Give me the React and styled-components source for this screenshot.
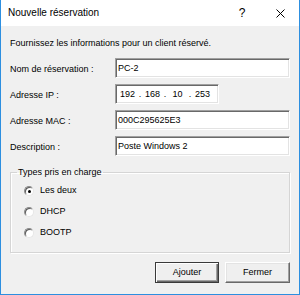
import React from 'react'
import styled, { createGlobalStyle } from 'styled-components'

const GlobalStyle = createGlobalStyle`
  html, body {
    margin: 0;
    padding: 0;
    background: #ffffff;
  }
  body {
    font-family: "Liberation Sans", Arial, sans-serif;
    font-size: 9px;
    color: #000;
  }
`

const Window = styled.div`
  width: 300px;
  height: 295px;
  box-sizing: border-box;
  display: flex;
  flex-direction: column;
  border: 1px solid #2d8fe0;
  border-top: none;
`

const TitleBar = styled.div`
  height: 26px;
  flex: none;
  display: flex;
  align-items: center;
  background: #ffffff;
`

const Title = styled.div`
  flex: 1;
  padding-left: 7px;
  font-size: 10px;
  line-height: 12px;
`

const TitleButton = styled.div`
  width: 38px;
  height: 26px;
  display: flex;
  align-items: center;
  justify-content: center;
  font-size: 12px;
`

const Body = styled.div`
  flex: 1;
  display: flex;
  flex-direction: column;
  background: #f0f0f0;
  padding: 12px 9px 10px 9px;
`

const Intro = styled.div`
  line-height: 11px;
  height: 11px;
`

const Form = styled.div`
  margin-top: 9px;
  display: flex;
  flex-direction: column;
  gap: 6px;
`

const Row = styled.div`
  display: flex;
  align-items: center;
  height: 20px;
`

const Label = styled.div`
  width: 105px;
  line-height: 11px;
  padding-top: 3px;
`

const Field = styled.div`
  box-sizing: border-box;
  width: ${(p) => p.$width}px;
  height: 20px;
  display: flex;
  align-items: center;
  padding-left: 2px;
  background: #ffffff;
  border: 1px solid;
  border-color: #a0a0a0 #ffffff #ffffff #a0a0a0;
  box-shadow: inset 1px 1px #696969, inset -1px -1px #e3e3e3;
  line-height: 11px;
`

const Segment = styled.span`
  width: 19px;
  text-align: center;
`

const Dot = styled.span`
  width: 6px;
  text-align: center;
`

const Group = styled.fieldset`
  margin: 11px 0 0;
  padding: 2px 0 9px;
  min-width: 0;
  border: 1px solid #d5d5d5;
  box-shadow: 1px 1px #ffffff, inset 1px 1px #ffffff;
`

const Legend = styled.legend`
  margin-left: 6px;
  padding: 0 1px;
  line-height: 11px;
`

const RadioRow = styled.label`
  display: flex;
  align-items: center;
  height: 21px;
  padding-left: 13px;
`

const RadioCircle = styled.span`
  box-sizing: border-box;
  width: 10px;
  height: 10px;
  border-radius: 50%;
  background: #ffffff;
  border: 1px solid;
  border-color: #8a8a8a #e6e6e6 #e6e6e6 #8a8a8a;
  box-shadow: inset 1px 1px #5a5a5a;
  display: flex;
  align-items: center;
  justify-content: center;

  &::after {
    content: '';
    width: 3px;
    height: 3px;
    border-radius: 50%;
    background: ${(p) => (p.$checked ? '#000' : 'transparent')};
    margin: 1px 0 0 1px;
  }
`

const RadioText = styled.span`
  margin-left: 6px;
  line-height: 11px;
`

const Buttons = styled.div`
  margin-top: 9px;
  display: flex;
  justify-content: flex-end;
  gap: 6px;
`

const Button = styled.div`
  box-sizing: border-box;
  width: ${(p) => p.$width}px;
  height: 21px;
  display: flex;
  align-items: center;
  justify-content: center;
  background: #efefef;
  border: 1px solid;
  border-color: ${(p) => (p.$default ? '#3a3a3a' : '#ffffff #696969 #696969 #ffffff')};
  box-shadow: ${(p) =>
    p.$default
      ? 'inset 1px 1px #ffffff, inset -1px -1px #696969, inset -2px -2px #a0a0a0'
      : 'inset -1px -1px #a0a0a0, inset 1px 1px #e3e3e3'};
  line-height: 11px;
`

const ip = ['192', '168', '10', '253']

export default function App() {
  return (
    <>
      <GlobalStyle />
      <Window>
        <TitleBar>
          <Title>Nouvelle réservation</Title>
          <TitleButton>?</TitleButton>
          <TitleButton>
            <svg width="9" height="9" viewBox="0 0 9 9">
              <path d="M0.5 0.5 L8.5 8.5 M8.5 0.5 L0.5 8.5" stroke="#000" strokeWidth="1" />
            </svg>
          </TitleButton>
        </TitleBar>
        <Body>
          <Intro>Fournissez les informations pour un client réservé.</Intro>
          <Form>
            <Row>
              <Label>Nom de réservation :</Label>
              <Field $width={175}>PC-2</Field>
            </Row>
            <Row>
              <Label>Adresse IP :</Label>
              <Field $width={104}>
                {ip.map((part, i) => (
                  <React.Fragment key={i}>
                    {i > 0 && <Dot>.</Dot>}
                    <Segment>{part}</Segment>
                  </React.Fragment>
                ))}
              </Field>
            </Row>
            <Row>
              <Label>Adresse MAC :</Label>
              <Field $width={175}>000C295625E3</Field>
            </Row>
            <Row>
              <Label>Description :</Label>
              <Field $width={175}>Poste Windows 2</Field>
            </Row>
          </Form>
          <Group>
            <Legend>Types pris en charge</Legend>
            <RadioRow>
              <RadioCircle $checked />
              <RadioText>Les deux</RadioText>
            </RadioRow>
            <RadioRow>
              <RadioCircle />
              <RadioText>DHCP</RadioText>
            </RadioRow>
            <RadioRow>
              <RadioCircle />
              <RadioText>BOOTP</RadioText>
            </RadioRow>
          </Group>
          <Buttons>
            <Button $width={64} $default>Ajouter</Button>
            <Button $width={65}>Fermer</Button>
          </Buttons>
        </Body>
      </Window>
    </>
  )
}
